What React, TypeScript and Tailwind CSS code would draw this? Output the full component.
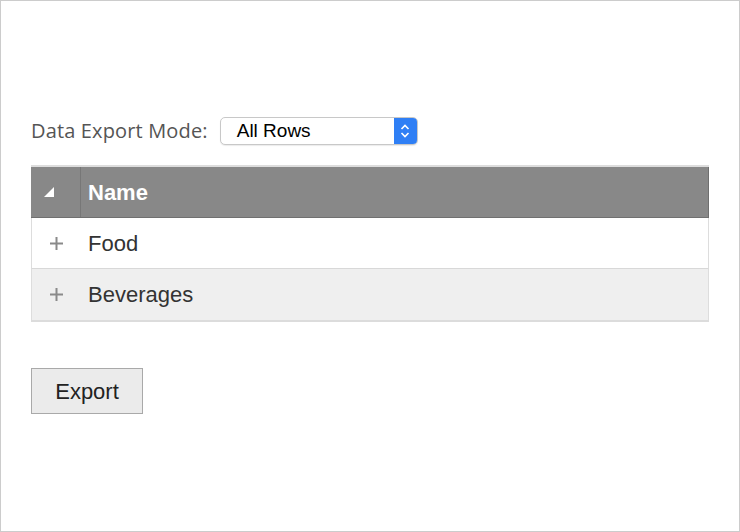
const rows = ["Food", "Beverages"];

function Plus() {
  return (
    <svg width="13" height="13" viewBox="0 0 13 13" className="block">
      <rect x="0" y="5.5" width="13" height="2" fill="#8a8a8a" />
      <rect x="5.5" y="0" width="2" height="13" fill="#8a8a8a" />
    </svg>
  );
}

export default function App() {
  return (
    <div className="w-[740px] h-[532px] border border-[#cccccc] bg-white box-border pl-[30px] pt-[116px] pr-[30px]">
      {/* Export mode */}
      <div className="flex items-center h-[28px]">
        <span className="text-[20px] text-[#555555] font-['Open_Sans',sans-serif] mr-[12px] tracking-[0.15px]">
          Data Export Mode:
        </span>
        <div className="flex w-[198px] h-[28px] rounded-[5px] border border-[#c8c8c8] bg-white overflow-hidden shadow-[0_1px_1px_rgba(0,0,0,0.08)]">
          <span className="flex-1 pl-[16px] flex items-center text-[19px] text-black font-['Liberation_Sans',Arial,sans-serif]">
            All Rows
          </span>
          <span className="w-[23px] bg-[#2f7ff5] flex items-center justify-center">
            <svg width="10" height="16" viewBox="0 0 10 16">
              <path d="M1.5 6 L5 2.5 L8.5 6" fill="none" stroke="white" strokeWidth="1.6" />
              <path d="M1.5 10 L5 13.5 L8.5 10" fill="none" stroke="white" strokeWidth="1.6" />
            </svg>
          </span>
        </div>
      </div>

      {/* Grid */}
      <div className="mt-[20px] w-[678px] border-t-2 border-t-[#dddddd] border-b-2 border-b-[#dcdcdc] font-['Liberation_Sans',Arial,sans-serif]">
        <div className="flex h-[51px] bg-[#888888] border-b border-b-[#707070] border-r border-r-[#6f6f6f]">
          <div className="w-[50px] border-r border-r-[#777777] flex items-center justify-center">
            <svg width="10" height="10" viewBox="0 0 10 10" className="-ml-[14px]">
              <polygon points="10,0 10,10 0,10" fill="white" />
            </svg>
          </div>
          <div className="flex items-center pl-[7px] text-[22px] font-bold text-white">Name</div>
        </div>
        {rows.map((name, i) => (
          <div
            key={name}
            className={`flex h-[51px] border-l border-l-[#dddddd] border-r border-r-[#dddddd] ${
              i === 0 ? "bg-white border-b border-b-[#d8d8d8]" : "bg-[#efefef]"
            }`}
          >
            <div className="w-[49px] flex items-center justify-center pr-[1px]">
              <Plus />
            </div>
            <div className="flex items-center pl-[7px] text-[22px] text-[#333333]">{name}</div>
          </div>
        ))}
      </div>

      <button className="mt-[46px] w-[112px] h-[46px] border border-[#a9a9a9] bg-[#ebebeb] text-[22px] text-[#222222] font-['Liberation_Sans',Arial,sans-serif]">
        Export
      </button>
    </div>
  );
}
